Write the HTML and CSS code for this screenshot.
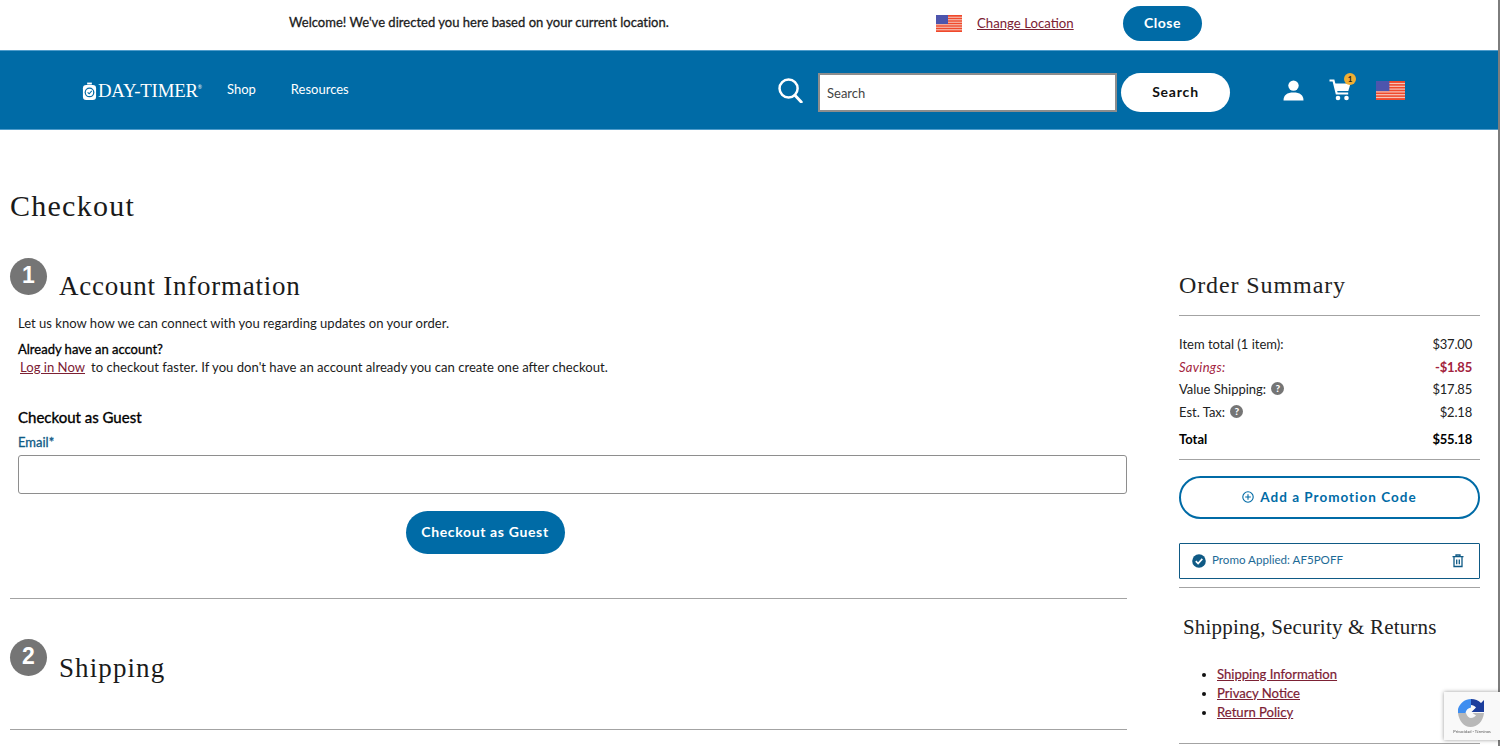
FILE: index.html
```html
<!DOCTYPE html>
<html lang="en">
<head>
<meta charset="utf-8">
<title>Checkout - Day-Timer</title>
<link rel="stylesheet" href="styles.css">
</head>
<body>
<svg class="defs" width="0" height="0" aria-hidden="true">
  <defs>
    <g id="us-flag">
      <rect width="26" height="17" fill="#f6c4b8"/>
      <rect y="0" width="26" height="1.700" fill="#f0492c"/>
      <rect y="2.800" width="26" height="1.400" fill="#f0492c"/>
      <rect y="5.300" width="26" height="1.400" fill="#f0492c"/>
      <rect y="7.800" width="26" height="1.400" fill="#f0492c"/>
      <rect y="10.300" width="26" height="1.400" fill="#f0492c"/>
      <rect y="12.800" width="26" height="1.400" fill="#f0492c"/>
      <rect y="15.300" width="26" height="1.700" fill="#f0492c"/>
      <rect width="12" height="9" fill="#4d55ad"/>
    </g>
  </defs>
</svg>
<div class="banner">
  <p class="banner-text">Welcome! We've directed you here based on your current location.</p>
  <svg class="flag-small" viewBox="0 0 26 17"><use href="#us-flag"/></svg>
  <a class="banner-link" href="#">Change Location</a>
  <button class="btn-close" type="button">Close</button>
</div>
<header class="site-header">
  <a class="logo" href="#">
    <svg class="logo-mark" viewBox="0 0 16 20">
      <rect x="5.500" y="0.500" width="5" height="2" fill="#fff"/>
      <rect x="1" y="3" width="14" height="16" rx="3.500" fill="#fff"/>
      <circle cx="8" cy="11" r="5.200" fill="#006ba6"/>
      <circle cx="8" cy="11" r="3.900" fill="#fff"/>
      <path d="M6 11l1.600 1.400L10.400 9.400" fill="none" stroke="#006ba6" stroke-width="1.100"/>
    </svg>
    <span class="logo-text">DAY-TIMER</span><sup class="logo-reg">®</sup>
  </a>
  <nav class="nav">
    <a href="#">Shop</a>
    <a href="#">Resources</a>
  </nav>
  <svg class="search-icon" viewBox="0 0 26 26"><circle cx="11" cy="11" r="9.400" fill="none" stroke="#fff" stroke-width="2.600"/><path d="M17.600 18l6.600 7" stroke="#fff" stroke-width="3" stroke-linecap="round"/></svg>
  <input class="search-input" type="text" placeholder="Search">
  <button class="btn-search" type="button">Search</button>
  <svg class="person" viewBox="0 0 21 21"><circle cx="10.500" cy="5.600" r="5.200" fill="#fff"/><path d="M0.500 20.500c0-5.400 3.600-8 10-8s10 2.600 10 8z" fill="#fff"/></svg>
  <span class="cart">
    <svg class="cart-icon" viewBox="0 0 24 22"><path d="M0.500 1.500h4l3.200 13h11.500" fill="none" stroke="#fff" stroke-width="2.200"/><path d="M5 4.500h16.500l-2.200 7.500H6.800z" fill="#fff"/><circle cx="9" cy="19" r="2.300" fill="#fff"/><circle cx="17.500" cy="19" r="2.300" fill="#fff"/></svg>
    <span class="cart-badge">1</span>
  </span>
  <svg class="flag-large" viewBox="0 0 26 17" preserveAspectRatio="none"><use href="#us-flag"/></svg>
</header>
<main class="page">
  <h1 class="page-title">Checkout</h1>
  <div class="columns">
    <section class="left">
      <div class="step-head step-head-first">
        <span class="step-num">1</span>
        <h2 class="step-title">Account Information</h2>
      </div>
      <div class="account">
        <p class="intro">Let us know how we can connect with you regarding updates on your order.</p>
        <p class="have-account">Already have an account?</p>
        <p class="login-line"><a class="link" href="#">Log in Now</a><span class="login-rest">to checkout faster. If you don't have an account already you can create one after checkout.</span></p>
        <h3 class="guest-title">Checkout as Guest</h3>
        <label class="email-label" for="email">Email*</label>
        <input class="email-input" id="email" type="text">
        <div class="guest-action"><button class="btn-guest" type="button">Checkout as Guest</button></div>
      </div>
      <hr class="rule">
      <div class="step-head step-head-second">
        <span class="step-num">2</span>
        <h2 class="step-title step-title-shipping">Shipping</h2>
      </div>
      <hr class="rule rule-shipping">
    </section>
    <aside class="right">
      <h2 class="summary-title">Order Summary</h2>
      <hr class="rule">
      <dl class="totals">
        <div class="row"><dt>Item total (1 item):</dt><dd>$37.00</dd></div>
        <div class="row row-savings"><dt>Savings:</dt><dd>-$1.85</dd></div>
        <div class="row"><dt>Value Shipping: <span class="help">?</span></dt><dd>$17.85</dd></div>
        <div class="row"><dt>Est. Tax: <span class="help">?</span></dt><dd>$2.18</dd></div>
        <div class="row row-total"><dt>Total</dt><dd>$55.18</dd></div>
      </dl>
      <hr class="rule">
      <button class="btn-promo" type="button">
        <svg class="plus" viewBox="0 0 12 12"><circle cx="6" cy="6" r="5.200" fill="none" stroke="#006ba6" stroke-width="1.100"/><path d="M6 3.200v5.600M3.200 6h5.600" stroke="#006ba6" stroke-width="1.100"/></svg>
        Add a Promotion Code
      </button>
      <div class="promo-applied">
        <svg class="check" viewBox="0 0 14 14"><circle cx="7" cy="7" r="6.800" fill="#0f5a85"/><path d="M3.800 7.200l2.300 2.300 4.200-4.600" fill="none" stroke="#fff" stroke-width="1.700"/></svg>
        <span class="promo-text">Promo Applied: AF5POFF</span>
        <svg class="trash" viewBox="0 0 12 14"><path d="M4 2V1h4v1M0.500 2.700h11M2 3v9.500h8V3M4.700 5.500v4.800M7.300 5.500v4.800" fill="none" stroke="#0f5a85" stroke-width="1.300"/></svg>
      </div>
      <hr class="rule rule-promo">
      <h2 class="ssr-title">Shipping, Security &amp; Returns</h2>
      <ul class="ssr-list">
        <li><a class="link" href="#">Shipping Information</a></li>
        <li><a class="link" href="#">Privacy Notice</a></li>
        <li><a class="link" href="#">Return Policy</a></li>
      </ul>
      <hr class="rule">
    </aside>
  </div>
</main>
<div class="recaptcha">
  <svg class="recaptcha-logo" viewBox="0 0 30 30">
    <path d="M15 1C9 1 4 5 2 11v4h7.500c.5-3 2.500-5 5.500-5.500z" fill="#3f8ef0"/>
    <path d="M15 1c4 0 7.500 1.500 10 4l3-3v12H15.500l4.500-4.500c-1.200-1.500-3-2.500-5-2.500z" fill="#1c3d9c"/>
    <path d="M2 15h8c1 3.500 3 5 5 5 2 0 3.500-1 5-2.500L16.500 15H28c-1 8.500-6.500 14-13.500 14C8 29 3 23 2 15z" fill="#b8b8b8"/>
  </svg>
  <span class="recaptcha-text">Privacidad - Términos</span>
</div>
</body>
</html>
```
FILE: styles.css
```css
* { box-sizing: border-box; }
html, body { margin: 0; height: 746px; overflow: hidden; background: #fff; }
body {
  font-family: Lato, "Noto Sans", sans-serif;
  font-size: 14px;
  color: #111;
  border-right: 2px solid #7d7d7d;
}
.defs { position: absolute; }
p, h1, h2, h3, dl, dd, ul { margin: 0; padding: 0; }
a { color: inherit; }

.banner {
  height: 50px;
  display: flex;
  align-items: center;
  padding: 0 0 4px 289px;
  background: #fff;
}
.banner-text { width: 647px; font-size: 13px; letter-spacing: 0.020px; color: #1c1c1c; -webkit-text-stroke: 0.300px #1c1c1c; position: relative; top: -1px; }
.flag-small { width: 26px; height: 17px; flex: none; }
.banner-link { margin-left: 15px; width: 146px; font-size: 13.200px; color: #7c2134; }
.btn-close {
  width: 79px; height: 35px; border: 0; border-radius: 18px; padding: 0 0 2px;
  background: #006ba6; color: #fff; font: 700 14px Lato, sans-serif; letter-spacing: 0.500px;
}

.site-header {
  height: 80px;
  display: flex;
  align-items: center;
  padding-left: 82px;
  background: #006ba6;
  border-top: 1px solid #4f9ccb;
  border-bottom: 1px solid #4f9ccb;
}
.logo { display: flex; align-items: center; width: 145px; padding-top: 2px; color: #fff; text-decoration: none; }
.logo-mark { width: 15px; height: 19px; flex: none; margin-right: 1px; }
.logo-text { font: 18.800px "Liberation Serif", serif; letter-spacing: -0.200px; }
.logo-reg { font-size: 5px; margin-top: -8px; }
.nav { display: flex; gap: 35px; width: 551px; font-size: 13px; color: #fff; position: relative; top: -1px; }
.nav a { text-decoration: none; color: #fff; }
.search-icon { width: 25px; height: 25px; flex: none; }
.search-input {
  width: 299px; height: 39px; margin: 4px 0 0 15px; padding: 1px 7px 0;
  border: 2px solid #8d8d8d; background: #fff; border-radius: 0;
  font: 13px Lato, sans-serif; color: #333;
}
.search-input::placeholder { color: #444; opacity: 1; }
.btn-search {
  width: 109px; height: 39px; margin: 4px 0 0 4px; padding: 0 0 2px; border: 0; border-radius: 20px;
  background: #fff; color: #111; font: 700 14px Lato, sans-serif; letter-spacing: 0.800px;
}
.person { width: 21px; height: 21px; margin-left: 53px; flex: none; }
.cart { position: relative; width: 24px; height: 22px; margin-left: 25px; flex: none; }
.cart-icon { width: 24px; height: 22px; display: block; }
.cart-badge {
  position: absolute; left: 15px; top: -6px; width: 12px; height: 12px; border-radius: 50%;
  background: #efae33; color: #222; font-size: 8px; font-weight: 700; line-height: 12px; text-align: center;
}
.flag-large { width: 29px; height: 19px; margin-left: 23px; flex: none; }

.page { padding: 0 18px 0 10px; }
.page-title { padding-top: 58px; font: 400 30px/36px "Liberation Serif", serif; letter-spacing: 1.250px; color: #1a1a1a; }
.columns { display: grid; grid-template-columns: 1117px 301px; column-gap: 52px; }

.step-head { display: flex; align-items: flex-start; }
.step-head-first { padding-top: 34px; }
.step-head-second { padding-top: 40px; }
.step-num {
  width: 37px; height: 37px; border-radius: 50%; flex: none;
  background: #757575; color: #fff; font: 700 23px/35px "Liberation Sans", sans-serif; text-align: center;
}
.step-title { margin: 11px 0 0 12px; font: 400 27px/34px "Liberation Serif", serif; letter-spacing: 0.750px; color: #1a1a1a; }
.step-title-shipping { margin-top: 12px; letter-spacing: 1.100px; }

.account { padding: 11px 0 0 8px; }
.intro { line-height: 18px; font-size: 13.050px; color: #1c1c1c; }
.have-account { margin-top: 8px; font-size: 13px; line-height: 18px; color: #000; -webkit-text-stroke: 0.300px #000; }
.login-line { font-size: 13.100px; line-height: 18px; color: #1c1c1c; padding-left: 2px; }
.login-rest { margin-left: 6px; }
.link { color: #7c2134; text-decoration: underline; }
.guest-title { margin-top: 31px; font-size: 15px; line-height: 20px; font-weight: 400; color: #000; -webkit-text-stroke: 0.350px #000; }
.email-label { display: block; margin-top: 6px; font-size: 13px; line-height: 18px; color: #0f5a85; -webkit-text-stroke: 0.300px #0f5a85; }
.email-input { display: block; width: 1109px; height: 39px; margin-top: 4px; border: 1px solid #8e8e8e; border-radius: 3px; background: #fff; }
.guest-action { display: flex; justify-content: center; margin-top: 17px; padding-right: 175px; }
.btn-guest {
  width: 159px; height: 43px; padding: 0 0 2px; border: 0; border-radius: 22px;
  background: #006ba6; color: #fff; font: 700 14px Lato, sans-serif; letter-spacing: 0.650px;
}
.rule { height: 1px; margin: 0; border: 0; background: #a3a3a3; }
.left > .rule { margin-top: 44px; }
.left > .rule-shipping { margin-top: 44px; }

.summary-title { padding-top: 44px; font: 400 24px/34px "Liberation Serif", serif; letter-spacing: 0.900px; color: #222; margin-bottom: 13px; }
.totals { padding-top: 17px; padding-right: 8px; font-size: 13px; color: #222; margin-bottom: 8px; }
.totals dd { letter-spacing: -0.200px; }
.row { display: flex; justify-content: space-between; height: 22.500px; line-height: 22px; }
.row-savings { color: #a3233d; }
.row-savings dt { font-style: italic; letter-spacing: 0.300px; }
.row-savings dd { font-weight: 700; }
.row-total { margin-top: 5px; font-weight: 700; color: #000; }
.help {
  display: inline-block; width: 13px; height: 13px; border-radius: 50%; margin-left: 2px;
  background: #757575; color: #fff; font-size: 10px; font-weight: 900; line-height: 13px; text-align: center;
  position: relative; top: -2px;
}
.btn-promo {
  display: flex; align-items: center; justify-content: center; gap: 6px;
  width: 301px; height: 43px; margin-top: 16px; border: 2px solid #006ba6; border-radius: 22px;
  background: #fff; color: #006ba6; font: 700 13.500px Lato, sans-serif; letter-spacing: 1px;
}
.plus { width: 12px; height: 12px; }
.promo-applied {
  display: flex; align-items: center; height: 36px; margin-top: 24px; padding: 0 15px 0 12px;
  border: 1px solid #0f5a85; border-radius: 1px;
}
.check { width: 14px; height: 14px; flex: none; }
.promo-text { margin-left: 6px; flex: 1; font-size: 11.600px; color: #1d6a96; position: relative; top: -1px; }
.trash { width: 12px; height: 14px; flex: none; }
.rule-promo { margin-top: 8px; }
.ssr-title { margin: 24px 0 0 4px; font: 400 21px/30px "Liberation Serif", serif; letter-spacing: 0.180px; color: #222; }
.ssr-list { margin: 23px 0 0; padding-left: 38px; font-size: 13.100px; line-height: 19px; }
.ssr-list .link { -webkit-text-stroke: 0.200px #7c2134; }
.right > .rule:last-child { margin-top: 21px; }

.recaptcha {
  position: fixed; left: 1444px; top: 692px; width: 56px; height: 48px;
  background: #f9f9f9; box-shadow: 0 0 4px rgba(0,0,0,0.4); text-align: center;
}
.recaptcha-logo { display: block; width: 30px; height: 30px; margin: 6px 0 0 12px; }
.recaptcha-text { display: block; font-size: 4px; line-height: 8px; white-space: nowrap; color: #555; }
```
